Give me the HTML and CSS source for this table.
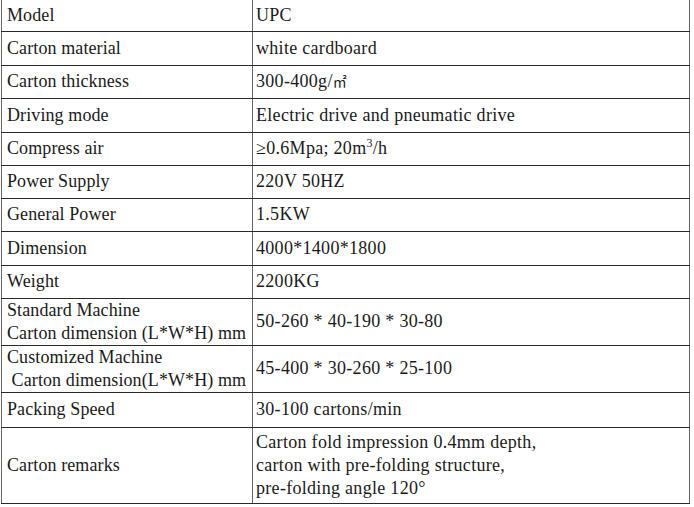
FILE: index.html
```html
<!DOCTYPE html>
<html>
<head>
<meta charset="utf-8">
<link rel="stylesheet" href="styles.css">
</head>
<body>
<table class="spec">
  <tr class="r31"><td class="k">Model</td><td class="v">UPC</td></tr>
  <tr class="r34"><td class="k">Carton material</td><td class="v">white cardboard</td></tr>
  <tr class="r33"><td class="k">Carton thickness</td><td class="v">300-400g/<span class="sqm">㎡</span></td></tr>
  <tr class="r34"><td class="k">Driving mode</td><td class="v">Electric drive and pneumatic drive</td></tr>
  <tr class="r33"><td class="k">Compress air</td><td class="v">≥0.6Mpa; 20m<sup>3</sup>/h</td></tr>
  <tr class="r33"><td class="k">Power Supply</td><td class="v">220V 50HZ</td></tr>
  <tr class="r33"><td class="k">General Power</td><td class="v">1.5KW</td></tr>
  <tr class="r34"><td class="k">Dimension</td><td class="v">4000*1400*1800</td></tr>
  <tr class="r33"><td class="k">Weight</td><td class="v">2200KG</td></tr>
  <tr class="r46"><td class="k">Standard Machine<br>Carton dimension (L*W*H) mm</td><td class="v">50-260 * 40-190 * 30-80</td></tr>
  <tr class="r47"><td class="k">Customized Machine<br><span class="pre"> Carton dimension(L*W*H) mm</span></td><td class="v">45-400 * 30-260 * 25-100</td></tr>
  <tr class="r35"><td class="k">Packing Speed</td><td class="v">30-100 cartons/min</td></tr>
  <tr class="r76"><td class="k">Carton remarks</td><td class="v">Carton fold impression 0.4mm depth,<br>carton with pre-folding structure,<br>pre-folding angle 120°</td></tr>
</table>
</body>
</html>
```

FILE: styles.css
```css
html, body {
  margin: 0;
  padding: 0;
  background: #ffffff;
}
body {
  padding-left: 1px;
}
.spec {
  border-collapse: collapse;
  width: 689px;
  table-layout: fixed;
  font-family: "Liberation Serif", "Times New Roman", serif;
  font-size: 18px;
  line-height: 23px;
  color: #1a1a1a;
}
.spec td {
  padding: 0 0 0 4px;
  vertical-align: middle;
  border-left: 1px solid #666;
  border-right: 1px solid #666;
  border-bottom: 1px solid #2a2a2a;
  white-space: nowrap;
  overflow: hidden;
}
.spec td.k {
  width: 245px;
  padding-left: 5px;
  letter-spacing: 0.1px;
}
.spec td.v {
  padding-left: 3px;
  letter-spacing: 0.3px;
}
.r31 { height: 31px; }
.r33 { height: 33px; }
.r34 { height: 34px; }
.r35 { height: 35px; }
.r46 { height: 46px; }
.r47 { height: 47px; }
.r76 { height: 76px; }
.pre { white-space: pre; }
.sqm {
  font-family: "Noto Sans CJK SC", sans-serif;
  font-size: 14px;
}
sup {
  font-size: 12px;
  line-height: 0;
  vertical-align: 7px;
}
```
